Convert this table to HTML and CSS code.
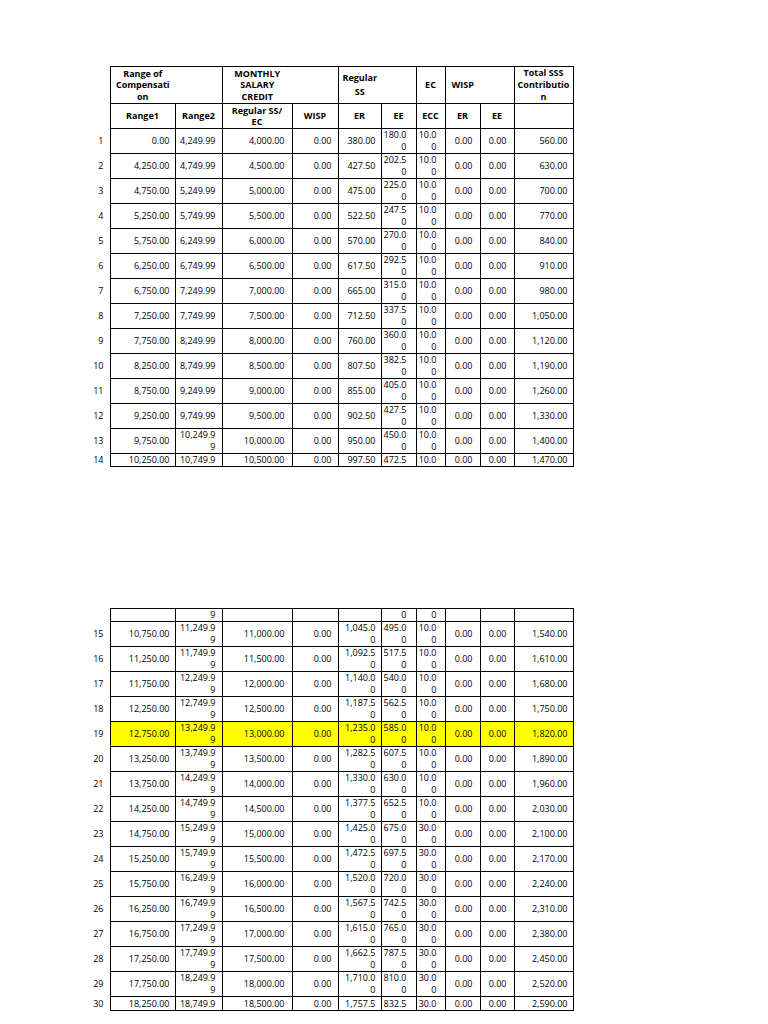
FILE: index.html
```html
<!DOCTYPE html>
<html>
<head>
<meta charset="utf-8">
<title>SSS Contribution Table</title>
<link rel="stylesheet" href="styles.css">
</head>
<body>
<div class="page">
<table class="sheet sheet-top">
<colgroup>
<col class="c-num"><col class="c-r1"><col class="c-r2"><col class="c-msc"><col class="c-wisp"><col class="c-er"><col class="c-ee"><col class="c-ecc"><col class="c-wer"><col class="c-wee"><col class="c-tot">
</colgroup>
<tbody>
<tr class="h1">
<td class="num"></td>
<td class="hd join-l">Range of<br>Compensati<br>on</td>
<td class="hd join-r"></td>
<td class="hd join-l">MONTHLY<br>SALARY<br>CREDIT</td>
<td class="hd join-r"></td>
<td class="hd join-l wide">Regular<br>SS</td>
<td class="hd join-r"></td>
<td class="hd">EC</td>
<td class="hd join-l">WISP</td>
<td class="hd join-r"></td>
<td class="hd tall">Total SSS<br>Contributio<br>n</td>
</tr>
<tr class="h2">
<td class="num"></td>
<td class="hd">Range1</td><td class="hd">Range2</td><td class="hd">Regular SS/<br>EC</td><td class="hd">WISP</td><td class="hd">ER</td><td class="hd">EE</td><td class="hd">ECC</td><td class="hd">ER</td><td class="hd">EE</td><td class="hd"></td>
</tr>
<tr><td class="num">1</td><td>0.00</td><td>4,249.99</td><td>4,000.00</td><td>0.00</td><td>380.00</td><td>180.0<br>0</td><td>10.0<br>0</td><td>0.00</td><td>0.00</td><td>560.00</td></tr>
<tr><td class="num">2</td><td>4,250.00</td><td>4,749.99</td><td>4,500.00</td><td>0.00</td><td>427.50</td><td>202.5<br>0</td><td>10.0<br>0</td><td>0.00</td><td>0.00</td><td>630.00</td></tr>
<tr><td class="num">3</td><td>4,750.00</td><td>5,249.99</td><td>5,000.00</td><td>0.00</td><td>475.00</td><td>225.0<br>0</td><td>10.0<br>0</td><td>0.00</td><td>0.00</td><td>700.00</td></tr>
<tr><td class="num">4</td><td>5,250.00</td><td>5,749.99</td><td>5,500.00</td><td>0.00</td><td>522.50</td><td>247.5<br>0</td><td>10.0<br>0</td><td>0.00</td><td>0.00</td><td>770.00</td></tr>
<tr><td class="num">5</td><td>5,750.00</td><td>6,249.99</td><td>6,000.00</td><td>0.00</td><td>570.00</td><td>270.0<br>0</td><td>10.0<br>0</td><td>0.00</td><td>0.00</td><td>840.00</td></tr>
<tr><td class="num">6</td><td>6,250.00</td><td>6,749.99</td><td>6,500.00</td><td>0.00</td><td>617.50</td><td>292.5<br>0</td><td>10.0<br>0</td><td>0.00</td><td>0.00</td><td>910.00</td></tr>
<tr><td class="num">7</td><td>6,750.00</td><td>7,249.99</td><td>7,000.00</td><td>0.00</td><td>665.00</td><td>315.0<br>0</td><td>10.0<br>0</td><td>0.00</td><td>0.00</td><td>980.00</td></tr>
<tr><td class="num">8</td><td>7,250.00</td><td>7,749.99</td><td>7,500.00</td><td>0.00</td><td>712.50</td><td>337.5<br>0</td><td>10.0<br>0</td><td>0.00</td><td>0.00</td><td>1,050.00</td></tr>
<tr><td class="num">9</td><td>7,750.00</td><td>8,249.99</td><td>8,000.00</td><td>0.00</td><td>760.00</td><td>360.0<br>0</td><td>10.0<br>0</td><td>0.00</td><td>0.00</td><td>1,120.00</td></tr>
<tr><td class="num">10</td><td>8,250.00</td><td>8,749.99</td><td>8,500.00</td><td>0.00</td><td>807.50</td><td>382.5<br>0</td><td>10.0<br>0</td><td>0.00</td><td>0.00</td><td>1,190.00</td></tr>
<tr><td class="num">11</td><td>8,750.00</td><td>9,249.99</td><td>9,000.00</td><td>0.00</td><td>855.00</td><td>405.0<br>0</td><td>10.0<br>0</td><td>0.00</td><td>0.00</td><td>1,260.00</td></tr>
<tr><td class="num">12</td><td>9,250.00</td><td>9,749.99</td><td>9,500.00</td><td>0.00</td><td>902.50</td><td>427.5<br>0</td><td>10.0<br>0</td><td>0.00</td><td>0.00</td><td>1,330.00</td></tr>
<tr class="r-tall"><td class="num">13</td><td>9,750.00</td><td>10,249.9<br>9</td><td>10,000.00</td><td>0.00</td><td>950.00</td><td>450.0<br>0</td><td>10.0<br>0</td><td>0.00</td><td>0.00</td><td>1,400.00</td></tr>
<tr class="short"><td class="num">14</td><td>10,250.00</td><td>10,749.9</td><td>10,500.00</td><td>0.00</td><td>997.50</td><td>472.5</td><td>10.0</td><td>0.00</td><td>0.00</td><td>1,470.00</td></tr>
</tbody>
</table>

<table class="sheet sheet-bottom">
<colgroup>
<col class="c-num"><col class="c-r1"><col class="c-r2"><col class="c-msc"><col class="c-wisp"><col class="c-er"><col class="c-ee"><col class="c-ecc"><col class="c-wer"><col class="c-wee"><col class="c-tot">
</colgroup>
<tbody>
<tr class="short"><td class="num"></td><td></td><td>9</td><td></td><td></td><td></td><td>0</td><td>0</td><td></td><td></td><td></td></tr>
<tr><td class="num">15</td><td>10,750.00</td><td>11,249.9<br>9</td><td>11,000.00</td><td>0.00</td><td>1,045.0<br>0</td><td>495.0<br>0</td><td>10.0<br>0</td><td>0.00</td><td>0.00</td><td>1,540.00</td></tr>
<tr><td class="num">16</td><td>11,250.00</td><td>11,749.9<br>9</td><td>11,500.00</td><td>0.00</td><td>1,092.5<br>0</td><td>517.5<br>0</td><td>10.0<br>0</td><td>0.00</td><td>0.00</td><td>1,610.00</td></tr>
<tr><td class="num">17</td><td>11,750.00</td><td>12,249.9<br>9</td><td>12,000.00</td><td>0.00</td><td>1,140.0<br>0</td><td>540.0<br>0</td><td>10.0<br>0</td><td>0.00</td><td>0.00</td><td>1,680.00</td></tr>
<tr><td class="num">18</td><td>12,250.00</td><td>12,749.9<br>9</td><td>12,500.00</td><td>0.00</td><td>1,187.5<br>0</td><td>562.5<br>0</td><td>10.0<br>0</td><td>0.00</td><td>0.00</td><td>1,750.00</td></tr>
<tr class="hl"><td class="num">19</td><td>12,750.00</td><td>13,249.9<br>9</td><td>13,000.00</td><td>0.00</td><td>1,235.0<br>0</td><td>585.0<br>0</td><td>10.0<br>0</td><td>0.00</td><td>0.00</td><td>1,820.00</td></tr>
<tr><td class="num">20</td><td>13,250.00</td><td>13,749.9<br>9</td><td>13,500.00</td><td>0.00</td><td>1,282.5<br>0</td><td>607.5<br>0</td><td>10.0<br>0</td><td>0.00</td><td>0.00</td><td>1,890.00</td></tr>
<tr><td class="num">21</td><td>13,750.00</td><td>14,249.9<br>9</td><td>14,000.00</td><td>0.00</td><td>1,330.0<br>0</td><td>630.0<br>0</td><td>10.0<br>0</td><td>0.00</td><td>0.00</td><td>1,960.00</td></tr>
<tr><td class="num">22</td><td>14,250.00</td><td>14,749.9<br>9</td><td>14,500.00</td><td>0.00</td><td>1,377.5<br>0</td><td>652.5<br>0</td><td>10.0<br>0</td><td>0.00</td><td>0.00</td><td>2,030.00</td></tr>
<tr><td class="num">23</td><td>14,750.00</td><td>15,249.9<br>9</td><td>15,000.00</td><td>0.00</td><td>1,425.0<br>0</td><td>675.0<br>0</td><td>30.0<br>0</td><td>0.00</td><td>0.00</td><td>2,100.00</td></tr>
<tr><td class="num">24</td><td>15,250.00</td><td>15,749.9<br>9</td><td>15,500.00</td><td>0.00</td><td>1,472.5<br>0</td><td>697.5<br>0</td><td>30.0<br>0</td><td>0.00</td><td>0.00</td><td>2,170.00</td></tr>
<tr><td class="num">25</td><td>15,750.00</td><td>16,249.9<br>9</td><td>16,000.00</td><td>0.00</td><td>1,520.0<br>0</td><td>720.0<br>0</td><td>30.0<br>0</td><td>0.00</td><td>0.00</td><td>2,240.00</td></tr>
<tr><td class="num">26</td><td>16,250.00</td><td>16,749.9<br>9</td><td>16,500.00</td><td>0.00</td><td>1,567.5<br>0</td><td>742.5<br>0</td><td>30.0<br>0</td><td>0.00</td><td>0.00</td><td>2,310.00</td></tr>
<tr><td class="num">27</td><td>16,750.00</td><td>17,249.9<br>9</td><td>17,000.00</td><td>0.00</td><td>1,615.0<br>0</td><td>765.0<br>0</td><td>30.0<br>0</td><td>0.00</td><td>0.00</td><td>2,380.00</td></tr>
<tr><td class="num">28</td><td>17,250.00</td><td>17,749.9<br>9</td><td>17,500.00</td><td>0.00</td><td>1,662.5<br>0</td><td>787.5<br>0</td><td>30.0<br>0</td><td>0.00</td><td>0.00</td><td>2,450.00</td></tr>
<tr><td class="num">29</td><td>17,750.00</td><td>18,249.9<br>9</td><td>18,000.00</td><td>0.00</td><td>1,710.0<br>0</td><td>810.0<br>0</td><td>30.0<br>0</td><td>0.00</td><td>0.00</td><td>2,520.00</td></tr>
<tr class="last"><td class="num">30</td><td>18,250.00</td><td>18,749.9</td><td>18,500.00</td><td>0.00</td><td>1,757.5</td><td>832.5</td><td>30.0</td><td>0.00</td><td>0.00</td><td>2,590.00</td></tr>
</tbody>
</table>
</div>
</body>
</html>
```

FILE: styles.css
```css
html, body {
  margin: 0;
  padding: 0;
  background: #ffffff;
}

.page {
  padding: 66px 0 0 80px;
  font-family: "Open Sans", "Liberation Sans", sans-serif;
  font-size: 9px;
  color: #000000;
}

.sheet {
  border-collapse: collapse;
  table-layout: fixed;
  width: 493px;
}

.sheet-bottom {
  margin-top: 141px;
}

.c-num { width: 30px; }
.c-r1 { width: 65px; }
.c-r2 { width: 47px; }
.c-msc { width: 70px; }
.c-wisp { width: 46px; }
.c-er { width: 43px; }
.c-ee { width: 35px; }
.c-ecc { width: 29px; }
.c-wer { width: 35px; }
.c-wee { width: 34px; }
.c-tot { width: 59px; }

.sheet td {
  border: 1px solid #000;
  padding: 0 6px 0 1px;
  height: 24px;
  line-height: 12px;
  text-align: right;
  vertical-align: middle;
  white-space: nowrap;
  overflow: hidden;
}

.sheet td.num {
  border: none;
  padding: 0 6px 0 0;
  text-align: right;
}

.sheet td:nth-child(2) { padding-right: 5px; }
.sheet td:nth-child(3) { padding-right: 6px; }
.sheet td:nth-child(4) { padding-right: 7px; }
.sheet td:nth-child(5) { padding-right: 6px; }
.sheet td:nth-child(6) { padding-right: 5px; }
.sheet td:nth-child(7) { padding-right: 9px; padding-left: 0; }
.sheet td:nth-child(8) { padding-right: 8px; padding-left: 0; }
.sheet td:nth-child(9) { padding-right: 7px; }
.sheet td:nth-child(10) { padding-right: 7px; }
.sheet td:nth-child(11) { padding-right: 5px; }

.sheet tr.h1 td { height: 36px; }
.sheet tr.h2 td { height: 24px; }

.sheet td.hd {
  font-weight: bold;
  text-align: center;
  padding: 0 1px;
  line-height: 11.5px;
}

.sheet td.hd.wide { line-height: 14px; }
.sheet td.hd.tall { line-height: 12px; }

.sheet td.join-l { border-right-style: hidden; }
.sheet td.join-r { border-left-style: hidden; }

.sheet tr.short td {
  height: 12px;
  line-height: 12px;
}

.sheet tr.last td {
  height: 13px;
}

.sheet tr.hl td:not(.num) {
  background: #ffff00;
}
```
